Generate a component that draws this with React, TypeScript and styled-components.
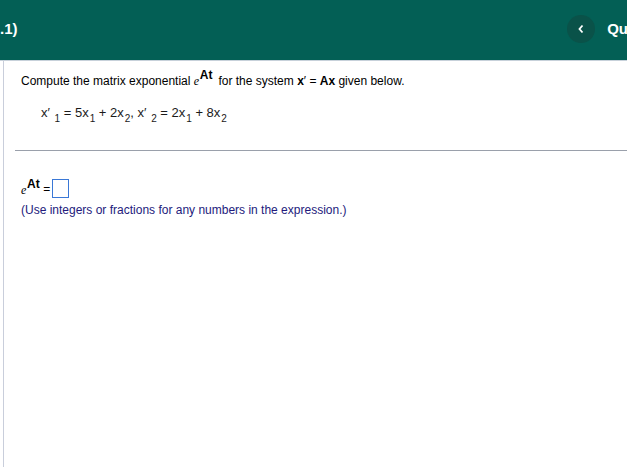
import React from "react";
import styled, { createGlobalStyle } from "styled-components";

const GlobalStyle = createGlobalStyle`
  html, body {
    margin: 0;
    padding: 0;
    background: #ffffff;
    font-family: "Liberation Sans", Arial, sans-serif;
  }
  body {
    width: 627px;
    height: 467px;
    overflow: hidden;
  }
`;

export default function App() {
  return (
    <>
      <GlobalStyle />
      <Page>
        <Header>
          <Title>.1)</Title>
          <Nav>
            <BackBtn aria-label="previous">
              <svg width="8" height="10" viewBox="0 0 8 10">
                <path d="M5.5 1.5 L2.5 5 L5.5 8.5" stroke="#ffffff" strokeWidth="1.8" fill="none" />
              </svg>
            </BackBtn>
            <NavLabel>Qu</NavLabel>
          </Nav>
        </Header>
        <Main>
          <Question>
            Compute the matrix exponential <Exp /> for the system <b>x</b>′ = <b>Ax</b> given below.
          </Question>
          <Equation>
            x′ <Sub>1</Sub> = 5x<Sub>1</Sub> + 2x<Sub>2</Sub>, x′ <Sub>2</Sub> = 2x<Sub>1</Sub> + 8x<Sub>2</Sub>
          </Equation>
          <Divider />
          <AnswerRow>
            <Exp />
            <Equals>=</Equals>
            <AnswerBox />
          </AnswerRow>
          <Hint>(Use integers or fractions for any numbers in the expression.)</Hint>
        </Main>
      </Page>
    </>
  );
}

function Exp() {
  return (
    <ExpWrap>
      <ExpBase>e</ExpBase>
      <ExpSup>At</ExpSup>
    </ExpWrap>
  );
}

const Page = styled.div`
  display: flex;
  flex-direction: column;
  width: 627px;
  height: 467px;
`;

const Header = styled.header`
  height: 60px;
  flex-shrink: 0;
  background: #035f55;
  border-bottom: 1px solid #c7d1da;
  display: flex;
  align-items: center;
  justify-content: space-between;
  color: #ffffff;
  overflow: hidden;
`;

const Title = styled.div`
  font-size: 15px;
  font-weight: bold;
  margin-left: 0;
  margin-top: -3px;
`;

const Nav = styled.div`
  display: flex;
  align-items: center;
  gap: 12px;
  margin-right: -1px;
  margin-top: -3px;
`;

const BackBtn = styled.button`
  all: unset;
  width: 28px;
  height: 28px;
  border-radius: 50%;
  background: #0a5249;
  display: flex;
  align-items: center;
  justify-content: center;
  cursor: pointer;
`;

const NavLabel = styled.span`
  font-size: 15px;
  font-weight: bold;
`;

const Main = styled.main`
  flex: 1;
  margin-left: 3px;
  border-left: 1px solid #c9cedb;
  padding: 12px 0 0 17px;
  font-size: 12px;
  color: #000000;
`;

const Question = styled.div`
  line-height: 16px;
  margin: 0;
`;

const ExpWrap = styled.span`
  display: inline-block;
  position: relative;
  padding-right: 16px;
`;

const ExpBase = styled.span`
  font-family: "Liberation Serif", "Times New Roman", serif;
  font-style: italic;
  font-size: 12px;
`;

const ExpSup = styled.span`
  position: absolute;
  left: 6px;
  top: -6px;
  font-size: 12px;
  font-weight: bold;
`;

const Equation = styled.div`
  margin: 15px 0 0 20px;
  font-size: 13px;
  line-height: 18px;
  color: #1a1a1a;
`;

const Sub = styled.sub`
  font-size: 10px;
  vertical-align: -5px;
  line-height: 0;
  margin-left: 1px;
`;

const Divider = styled.hr`
  border: 0;
  border-top: 1px solid #9aa0ab;
  margin: 28px 0 0 -6px;
`;

const AnswerRow = styled.div`
  display: flex;
  align-items: flex-end;
  margin-top: 28px;
  height: 19px;
  line-height: 16px;
`;

const Equals = styled.span`
  margin-left: 1px;
  margin-right: 2px;
  padding-bottom: 1px;
`;

const AnswerBox = styled.span`
  display: inline-block;
  width: 15px;
  height: 17px;
  border: 1px solid #3a78d6;
`;

const Hint = styled.div`
  margin-top: 4px;
  color: #231a7c;
  line-height: 16px;
`;
